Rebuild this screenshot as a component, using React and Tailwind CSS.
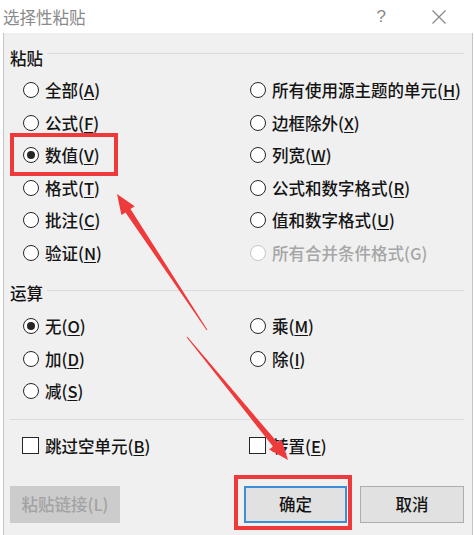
import React from "react";

const Radio = ({ checked, disabled }) => (
  <span
    className={
      "w-[16px] h-[16px] rounded-full border-[1.7px] bg-white flex items-center justify-center shrink-0 " +
      (disabled ? "border-[#c6c6c6]" : "border-[#262626]")
    }
  >
    {checked && <span className="w-[8px] h-[8px] rounded-full bg-[#262626]" />}
  </span>
);

const Check = () => (
  <span className="w-[17px] h-[17px] border-[1.7px] border-[#262626] bg-white shrink-0" />
);

const Label = ({ text, k, disabled }) => (
  <span className={"text-[16.5px] leading-[20px] whitespace-nowrap font-medium " + (disabled ? "text-[#a6a6a6]" : "text-[#141414]")}>
    {text}(
    {disabled ? k : <span className="underline underline-offset-[2px] decoration-[1px]">{k}</span>})
  </span>
);

const Row = ({ text, k, checked, disabled, box }) => (
  <div className="h-[32.5px] flex items-center gap-[6px]">
    {box ? <Check /> : <Radio checked={checked} disabled={disabled} />}
    <Label text={text} k={k} disabled={disabled} />
  </div>
);

const Header = ({ title, lineMt }) => (
  <div className="h-[24px] flex pl-[6px] pr-[8px]">
    <span className="text-[16.5px] leading-[24px] text-[#141414] whitespace-nowrap font-medium">{title}</span>
    <div className={"flex-1 h-px bg-[#dadada] ml-[4px] " + lineMt} />
  </div>
);

export default function App() {
  return (
    <div className="w-[474px] h-[535px] bg-white relative overflow-hidden flex flex-col font-['Noto_Sans_CJK_SC',sans-serif]">
      {/* title bar */}
      <div className="h-[33px] flex items-center pl-[3px] pr-[27px] shrink-0">
        <span className="text-[16.5px] text-[#8a8a8a] leading-[20px]">选择性粘贴</span>
        <span className="ml-auto text-[17px] text-[#8a8a8a] leading-[20px] mr-[45px] font-['Liberation_Sans',sans-serif]">?</span>
        <svg width="16" height="16" viewBox="0 0 16 16" className="block">
          <path d="M1.5 1.5 L14.5 14.5 M14.5 1.5 L1.5 14.5" stroke="#8a8a8a" strokeWidth="1.3" fill="none" />
        </svg>
      </div>

      {/* body */}
      <div className="flex-1 bg-[#f0f0f0] ml-[3px] mr-[1px] border-l border-r border-[#c4c4c4] flex flex-col pt-[13px]">
        <Header title="粘贴" lineMt="mt-[7px]" />
        <div className="grid grid-cols-[227px_1fr] pl-[19px] mt-[4px]">
          <div className="flex flex-col">
            <Row text="全部" k="A" />
            <Row text="公式" k="F" />
            <Row text="数值" k="V" checked />
            <Row text="格式" k="T" />
            <Row text="批注" k="C" />
            <Row text="验证" k="N" />
          </div>
          <div className="flex flex-col">
            <Row text="所有使用源主题的单元" k="H" />
            <Row text="边框除外" k="X" />
            <Row text="列宽" k="W" />
            <Row text="公式和数字格式" k="R" />
            <Row text="值和数字格式" k="U" />
            <Row text="所有合并条件格式" k="G" disabled />
          </div>
        </div>

        <div className="mt-[12px]">
          <Header title="运算" lineMt="mt-[9px]" />
        </div>
        <div className="grid grid-cols-[227px_1fr] pl-[19px] mt-[5px]">
          <div className="flex flex-col">
            <Row text="无" k="O" checked />
            <Row text="加" k="D" />
            <Row text="减" k="S" />
          </div>
          <div className="flex flex-col">
            <Row text="乘" k="M" />
            <Row text="除" k="I" />
          </div>
        </div>

        <div className="h-px bg-[#dadada] mt-[11px] ml-[6px] mr-[8px]" />

        <div className="grid grid-cols-[227px_1fr] pl-[18px] mt-[10px]">
          <Row text="跳过空单元" k="B" box />
          <Row text="转置" k="E" box />
        </div>

        <div className="flex mt-[24px] pl-[6px]">
          <div className="w-[110px] h-[37px] bg-[#cccccc] flex items-center justify-center text-[16.5px] text-[#a3a3a3] font-medium">
            粘贴链接(L)
          </div>
          <div className="w-[103px] h-[37px] ml-[124px] bg-[#e1e1e1] border-2 border-[#3c8fd6] flex items-center justify-center text-[16.5px] text-[#141414] font-medium">
            确定
          </div>
          <div className="w-[104px] h-[37px] ml-[13px] bg-[#e1e1e1] border border-[#adadad] flex items-center justify-center text-[16.5px] text-[#141414] font-medium">
            取消
          </div>
        </div>
      </div>

      {/* annotation overlays */}
      <div className="absolute left-[10px] top-[133px] w-[108px] h-[43px] border-[4px] border-[#ef3a3c] pointer-events-none" />
      <div className="absolute left-[234px] top-[475px] w-[118px] h-[55px] border-[4px] border-[#ef3a3c] pointer-events-none" />
      <svg className="absolute left-0 top-0 pointer-events-none" width="474" height="535" viewBox="0 0 474 535">
        <polygon
          points="207.4,329.7 130.5,209.0 134.7,206.3 117,194 121.4,215.1 125.5,212.4 206.6,330.3"
          fill="#ef3a3c"
        />
        <polygon
          points="186.6,337.3 273.0,446.4 269.1,449.6 288,460 281.5,439.4 277.6,442.6 187.4,336.7"
          fill="#ef3a3c"
        />
      </svg>
    </div>
  );
}
